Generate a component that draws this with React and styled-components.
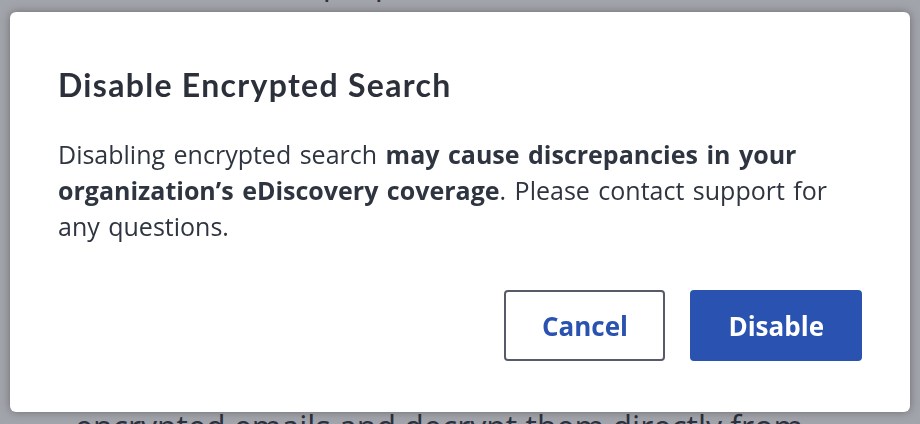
import styled, { createGlobalStyle } from 'styled-components';

const GlobalStyle = createGlobalStyle`
  html, body {
    margin: 0;
    padding: 0;
    background: #ffffff;
    overflow: hidden;
  }
`;

const Page = styled.div`
  height: 424px;
  overflow: hidden;
  padding: 0 75px;
  font-family: "Open Sans", "Liberation Sans", sans-serif;
  font-size: 32px;
  line-height: 44.5px;
  color: #2f3540;
`;

const PageText = styled.div`
  margin-top: -40.5px;
`;

const PageLine = styled.div`
  white-space: nowrap;
`;

const Overlay = styled.div`
  position: fixed;
  inset: 0;
  background: rgba(40, 44, 60, 0.43);
  display: flex;
  align-items: center;
  justify-content: center;
`;

const Modal = styled.div`
  width: 900px;
  height: 400px;
  box-sizing: border-box;
  background: #ffffff;
  border-radius: 6px;
  box-shadow: 0 0 10px rgba(0, 0, 0, 0.35);
  padding: 55px 48px 51px;
  display: flex;
  flex-direction: column;
  color: #2f3540;
`;

const Title = styled.h2`
  margin: 0;
  font-family: Lato, "Open Sans", sans-serif;
  font-weight: 700;
  font-size: 32px;
  letter-spacing: 1.3px;
  line-height: 36px;
  color: #2b303a;
`;

const Body = styled.p`
  margin: 33px 0 0;
  font-family: "Open Sans", "Liberation Sans", sans-serif;
  font-size: 25px;
  word-spacing: 2px;
  line-height: 36px;
  color: #2f3540;

  strong {
    font-weight: 700;
  }
`;

const Footer = styled.div`
  margin-top: auto;
  display: flex;
  justify-content: flex-end;
  gap: 25px;
`;

const Button = styled.button`
  height: 71px;
  padding: 0 ${(p) => (p.$primary ? 36 : 35.5)}px;
  border-radius: 4px;
  font-family: "Open Sans", "Liberation Sans", sans-serif;
  font-weight: 700;
  font-size: 26px;
  cursor: pointer;
  box-sizing: border-box;
  border: 2px solid ${(p) => (p.$primary ? '#2a52b0' : '#555b68')};
  background: ${(p) => (p.$primary ? '#2a52b0' : '#ffffff')};
  color: ${(p) => (p.$primary ? '#ffffff' : '#2a52b0')};
`;

const pageLines = [
  'Then the search proper will look at each one',
  'With encrypted search enabled, you can look for',
  'words inside messages, filter results by sender',
  'and date, and find what you need quickly. The',
  'index is built on your device and stays there,',
  'so nothing leaves it unprotected. Your team can',
  'keep working as usual while the index is being',
  'created in the background. When it is ready,',
  'everyone will be able to search through their',
  'messages, open attachments, and read their',
  'encrypted emails and decrypt them directly from',
];

export default function App() {
  return (
    <>
      <GlobalStyle />
      <Page>
        <PageText>
          {pageLines.map((line) => (
            <PageLine key={line}>{line}</PageLine>
          ))}
        </PageText>
      </Page>
      <Overlay>
        <Modal role="dialog">
          <Title>Disable Encrypted Search</Title>
          <Body>
            Disabling encrypted search{' '}
            <strong>may cause discrepancies in your organization’s eDiscovery coverage</strong>.
            Please contact support for any questions.
          </Body>
          <Footer>
            <Button>Cancel</Button>
            <Button $primary>Disable</Button>
          </Footer>
        </Modal>
      </Overlay>
    </>
  );
}
